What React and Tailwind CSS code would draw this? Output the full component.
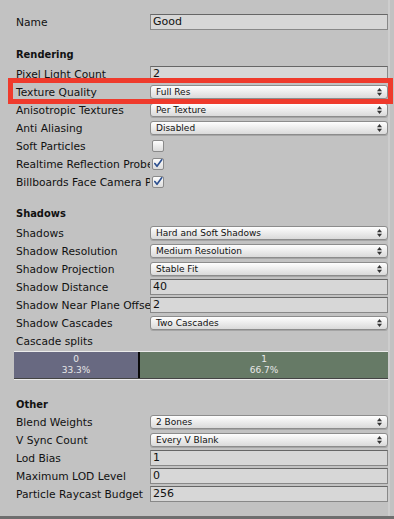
import React from "react";

const rendering = [
  { label: "Pixel Light Count", type: "field", value: "2" },
  { label: "Texture Quality", type: "popup", value: "Full Res" },
  { label: "Anisotropic Textures", type: "popup", value: "Per Texture" },
  { label: "Anti Aliasing", type: "popup", value: "Disabled" },
  { label: "Soft Particles", type: "check", value: false },
  { label: "Realtime Reflection Probes", type: "check", value: true },
  { label: "Billboards Face Camera Position", type: "check", value: true },
];

const shadows = [
  { label: "Shadows", type: "popup", value: "Hard and Soft Shadows" },
  { label: "Shadow Resolution", type: "popup", value: "Medium Resolution" },
  { label: "Shadow Projection", type: "popup", value: "Stable Fit" },
  { label: "Shadow Distance", type: "field", value: "40" },
  { label: "Shadow Near Plane Offset", type: "field", value: "2" },
  { label: "Shadow Cascades", type: "popup", value: "Two Cascades" },
];

const other = [
  { label: "Blend Weights", type: "popup", value: "2 Bones" },
  { label: "V Sync Count", type: "popup", value: "Every V Blank" },
  { label: "Lod Bias", type: "field", value: "1" },
  { label: "Maximum LOD Level", type: "field", value: "0" },
  { label: "Particle Raycast Budget", type: "field", value: "256" },
];

const Arrows = () => (
  <svg width="5" height="8" viewBox="0 0 5 8" className="shrink-0">
    <polygon points="0,3.2 2.5,0 5,3.2" fill="#333" />
    <polygon points="0,4.8 2.5,8 5,4.8" fill="#333" />
  </svg>
);

const Field = ({ value }) => (
  <div className="h-[16px] flex-1 flex items-center border border-[#888] border-t-[#666] bg-[#d7d7d7] pl-[2px] text-[11px] leading-[14px] text-[#111]">
    {value}
  </div>
);

const Popup = ({ value }) => (
  <div className="h-[14px] flex-1 flex items-center rounded-[3px] border border-[#8c8c8c] bg-linear-to-b from-[#fefefe] to-[#dadada] pl-[5px] pr-[5px] text-[9px] leading-[12px] text-[#111] shadow-[0_1px_0_rgba(0,0,0,0.15)]">
    <span className="flex-1">{value}</span>
    <Arrows />
  </div>
);

const Check = ({ on }) => (
  <div className="ml-[2px] w-[12px] h-[12px] rounded-[2px] border border-[#8a8a8a] bg-linear-to-b from-[#fdfdfd] to-[#dcdcdc] flex items-center justify-center">
    {on && (
      <svg width="11" height="11" viewBox="0 0 11 11" className="-mt-[1px]">
        <path d="M2 5.5 L4.4 8.6 L9.6 1.4" stroke="#2c4f8f" strokeWidth="1.8" fill="none" strokeLinecap="round" strokeLinejoin="round" />
      </svg>
    )}
  </div>
);

const Row = ({ item, className = "" }) => (
  <div className={`h-[18px] flex items-center ${className}`}>
    <div className="w-[136px] h-[18px] pl-[2px] overflow-hidden whitespace-nowrap text-[10.7px] leading-[19px] text-[#111]">
      {item.label}
    </div>
    <div className="flex-1 flex items-center">
      {item.type === "field" && <Field value={item.value} />}
      {item.type === "popup" && <Popup value={item.value} />}
      {item.type === "check" && <Check on={item.value} />}
    </div>
  </div>
);

const Header = ({ children, className = "" }) => (
  <div
    className={`h-[18px] pl-[2px] text-[11px] font-bold leading-[19px] text-[#111] ${className}`}
    style={{ fontFamily: '"DejaVu Sans Condensed", "DejaVu Sans", sans-serif' }}
  >
    {children}
  </div>
);

export default function App() {
  return (
    <div
      className="relative w-[394px] h-[519px] overflow-hidden bg-[#c2c2c2] flex flex-col"
      style={{ fontFamily: '"DejaVu Sans", Verdana, sans-serif' }}
    >
      <div className="flex-1 flex">
        <div className="w-[388px] pl-[14px] pt-[13px]">
          <Row item={{ label: "Name", type: "field", value: "Good" }} />

          <Header className="mt-[14px]">Rendering</Header>
          {rendering.map((it, i) => (
            <Row key={it.label} item={it} className={i === 0 ? "mt-[2px]" : ""} />
          ))}

          <Header className="mt-[13px]">Shadows</Header>
          {shadows.map((it, i) => (
            <Row key={it.label} item={it} className={i === 0 ? "mt-[2px]" : ""} />
          ))}
          <div className="h-[18px] pl-[2px] text-[10.7px] leading-[19px] text-[#111]">
            Cascade splits
          </div>

          {/* cascade split bar */}
          <div className="mt-[1px] border-t border-b border-[#ececec]">
            <div className="h-[27px] flex border-b border-[#444] text-[9px] leading-[11px] text-[#e8e8e8]">
              <div className="w-[124px] bg-[#686981] flex flex-col items-center justify-center">
                <span>0</span>
                <span>33.3%</span>
              </div>
              <div className="w-[2px] bg-[#0a0a0a]" />
              <div className="flex-1 bg-[#667a66] flex flex-col items-center justify-center">
                <span>1</span>
                <span>66.7%</span>
              </div>
            </div>
          </div>

          <Header className="mt-[15px]">Other</Header>
          {other.map((it) => (
            <Row key={it.label} item={it} />
          ))}
        </div>
        <div className="w-[2px] bg-[#cdcdcd]" />
      </div>
      <div className="h-[3px] bg-[#6e6e6e]" />

      {/* highlight box around Texture Quality */}
      <div className="absolute left-[8px] top-[78px] w-[385px] h-[26px] border-[5px] border-[#ef3a2c]" />
    </div>
  );
}
